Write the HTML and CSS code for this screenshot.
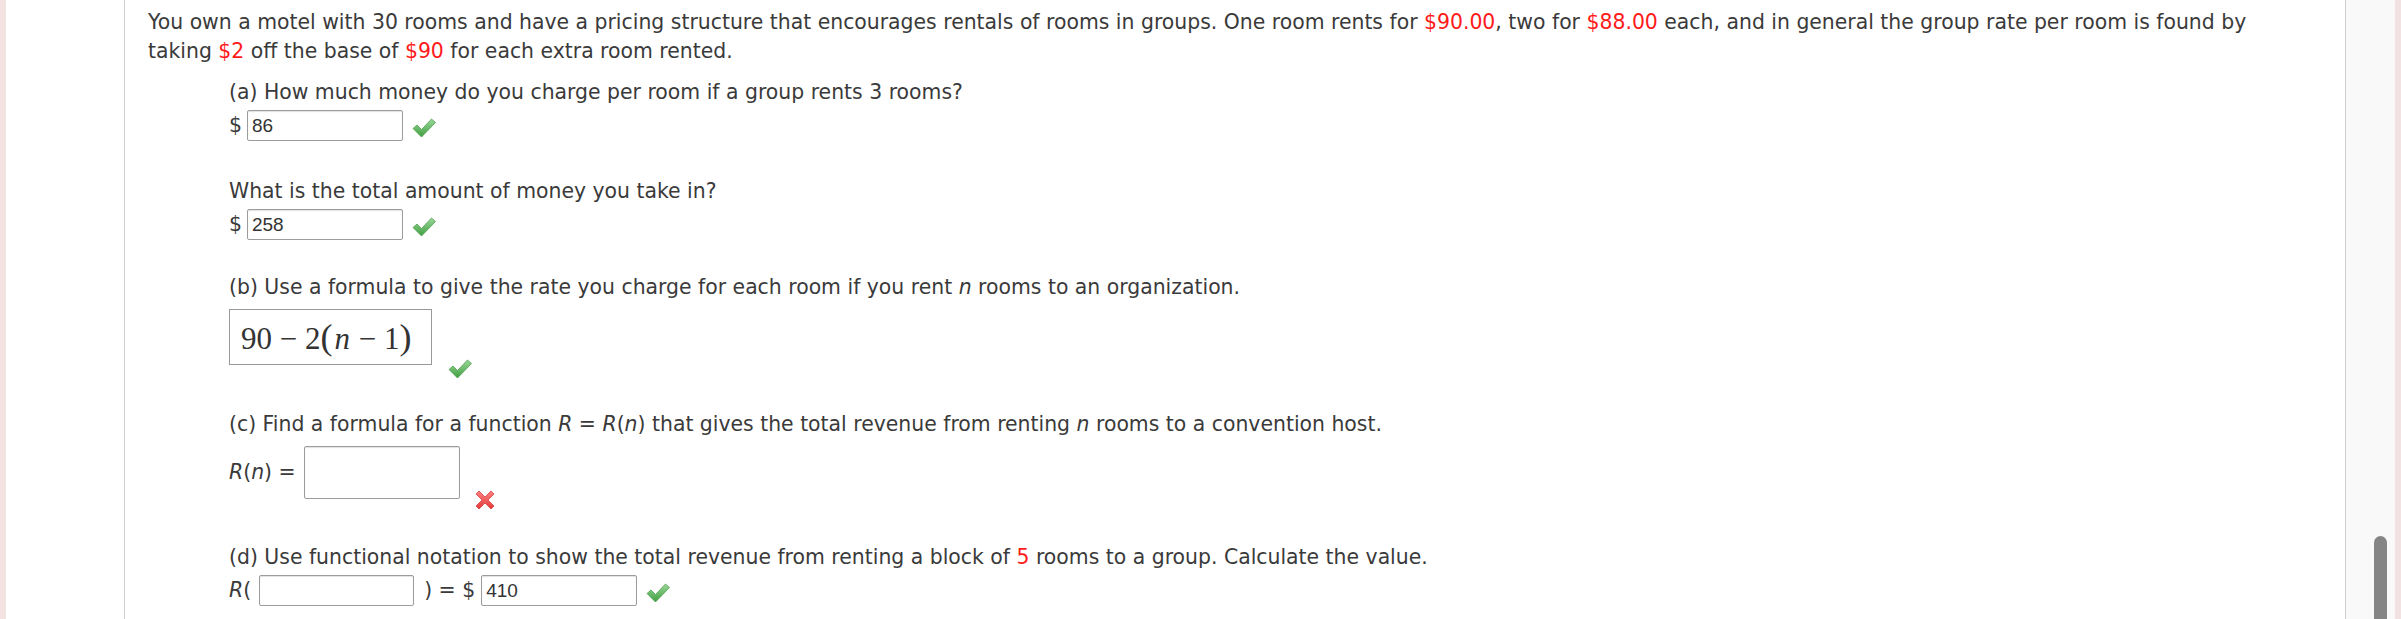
FILE: index.html
```html
<!DOCTYPE html>
<html>
<head>
<meta charset="utf-8">
<link rel="stylesheet" href="styles.css">
</head>
<body>
<div class="page">
  <div class="edge edge-l"></div>
  <div class="gutter-l"></div>
  <main class="content">
    <p class="intro">You own a motel with 30 rooms and have a pricing structure that encourages rentals of rooms in groups. One room rents for <span class="red">$90.00</span>, two for <span class="red">$88.00</span> each, and in general the group rate per room is found by taking <span class="red">$2</span> off the base of <span class="red">$90</span> for each extra room rented.</p>

    <section class="part part-a">
      <p class="q">(a) How much money do you charge per room if a group rents 3 rooms?</p>
      <div class="row">
        <span class="lbl">$</span>
        <span class="input">86</span>
        <svg class="ok" viewBox="0 0 24 20" width="24" height="20"><defs><linearGradient id="g1" x1="0" y1="0" x2="0" y2="1"><stop offset="0" stop-color="#9ad89a"/><stop offset="1" stop-color="#3f9e3f"/></linearGradient></defs><path d="M1 10.5 L5 7 L9.5 11.5 L19.5 1 L23.5 4.5 L9.5 19 Z" fill="url(#g1)" stroke="#4f9f4f" stroke-width="0.8" stroke-linejoin="round"/></svg>
      </div>
    </section>

    <section class="part part-a2">
      <p class="q">What is the total amount of money you take in?</p>
      <div class="row">
        <span class="lbl">$</span>
        <span class="input">258</span>
        <svg class="ok" viewBox="0 0 24 20" width="24" height="20"><defs><linearGradient id="g2" x1="0" y1="0" x2="0" y2="1"><stop offset="0" stop-color="#9ad89a"/><stop offset="1" stop-color="#3f9e3f"/></linearGradient></defs><path d="M1 10.5 L5 7 L9.5 11.5 L19.5 1 L23.5 4.5 L9.5 19 Z" fill="url(#g2)" stroke="#4f9f4f" stroke-width="0.8" stroke-linejoin="round"/></svg>
      </div>
    </section>

    <section class="part part-b">
      <p class="q">(b) Use a formula to give the rate you charge for each room if you rent <i>n</i> rooms to an organization.</p>
      <div class="row row-bottom">
        <span class="mathbox">90 − 2<span class="paren">(</span><i>n</i> − 1<span class="paren">)</span></span>
        <svg class="ok ok-low" viewBox="0 0 24 20" width="24" height="20"><defs><linearGradient id="g3" x1="0" y1="0" x2="0" y2="1"><stop offset="0" stop-color="#9ad89a"/><stop offset="1" stop-color="#3f9e3f"/></linearGradient></defs><path d="M1 10.5 L5 7 L9.5 11.5 L19.5 1 L23.5 4.5 L9.5 19 Z" fill="url(#g3)" stroke="#4f9f4f" stroke-width="0.8" stroke-linejoin="round"/></svg>
      </div>
    </section>

    <section class="part part-c">
      <p class="q">(c) Find a formula for a function <i>R</i> = <i>R</i>(<i>n</i>) that gives the total revenue from renting <i>n</i> rooms to a convention host.</p>
      <div class="row row-c">
        <span class="lbl"><i>R</i>(<i>n</i>) =</span>
        <span class="input input-big"></span>
        <svg class="bad" viewBox="0 0 22 22" width="22" height="22"><defs><linearGradient id="r1" x1="0" y1="0" x2="0" y2="1"><stop offset="0" stop-color="#ff8080"/><stop offset="1" stop-color="#e23b3b"/></linearGradient></defs><path d="M2 5 L5 2 L11 8 L17 2 L20 5 L14 11 L20 17 L17 20 L11 14 L5 20 L2 17 L8 11 Z" fill="url(#r1)" stroke="#d84040" stroke-width="0.8" stroke-linejoin="round"/></svg>
      </div>
    </section>

    <section class="part part-d">
      <p class="q">(d) Use functional notation to show the total revenue from renting a block of <span class="red">5</span> rooms to a group. Calculate the value.</p>
      <div class="row">
        <span class="lbl lbl-r"><i>R</i>(</span>
        <span class="input input-arg"></span>
        <span class="lbl lbl-mid">) = $</span>
        <span class="input">410</span>
        <svg class="ok" viewBox="0 0 24 20" width="24" height="20"><defs><linearGradient id="g4" x1="0" y1="0" x2="0" y2="1"><stop offset="0" stop-color="#9ad89a"/><stop offset="1" stop-color="#3f9e3f"/></linearGradient></defs><path d="M1 10.5 L5 7 L9.5 11.5 L19.5 1 L23.5 4.5 L9.5 19 Z" fill="url(#g4)" stroke="#4f9f4f" stroke-width="0.8" stroke-linejoin="round"/></svg>
      </div>
    </section>
  </main>
  <div class="gutter-r"><div class="thumb"></div></div>
  <div class="edge edge-r"></div>
</div>
</body>
</html>
```
FILE: styles.css
```css
html, body {
  margin: 0;
  padding: 0;
  background: #ffffff;
}
body {
  font-family: "DejaVu Sans", Verdana, sans-serif;
  font-size: 20.4px;
  color: #3a3a3a;
}
.page {
  display: flex;
  height: 619px;
  overflow: hidden;
}
.edge {
  width: 6px;
  background: #f2e2e2;
  flex: none;
}
.gutter-l {
  width: 118px;
  flex: none;
  background: #ffffff;
  border-right: 1px solid #cfcfcf;
}
.content {
  flex: 1;
  padding: 8px 60px 0 23px;
  line-height: 29px;
}
.gutter-r {
  width: 49px;
  flex: none;
  border-left: 1px solid #cfcfcf;
  background: #f9f9f9;
  position: relative;
}
.thumb {
  position: absolute;
  left: 28px;
  top: 536px;
  width: 13px;
  height: 120px;
  background: #858585;
  border-radius: 7px 7px 0 0;
}
p {
  margin: 0;
}
.red {
  color: #ff1a1a;
}
.part {
  margin-left: 81px;
}
.part-a { margin-top: 12px; }
.part-a2 { margin-top: 36px; }
.part-b { margin-top: 33px; }
.part-c { margin-top: 45px; }
.part-d { margin-top: 44px; }
.row {
  display: flex;
  align-items: flex-end;
  margin-top: 3px;
}
.lbl {
  line-height: 31px;
  align-self: center;
  margin-right: 5px;
}
.lbl-r {
  margin-right: 8px;
}
.lbl-mid {
  margin-left: 10px;
  margin-right: 6px;
}
.input {
  box-sizing: border-box;
  width: 156px;
  height: 31px;
  border: 1px solid #9c9c9c;
  border-radius: 2px;
  box-shadow: inset 0 1px 1px rgba(0,0,0,0.12);
  font-family: "Liberation Sans", Arial, sans-serif;
  font-size: 19px;
  line-height: 29px;
  padding-left: 4px;
  color: #333333;
  background: #ffffff;
}
.input-arg {
  width: 155px;
}
.input-big {
  width: 156px;
  height: 53px;
}
.row-c {
  margin-top: 7px;
}
.row-c .lbl {
  margin-right: 8px;
}
.ok {
  margin-left: 9px;
  margin-bottom: 3px;
  flex: none;
}
.ok-low {
  margin-left: 16px;
  margin-bottom: -14px;
}
.bad {
  margin-left: 14px;
  margin-bottom: -12px;
  flex: none;
}
.row-bottom {
  margin-top: 7px;
}
.mathbox {
  box-sizing: border-box;
  width: 203px;
  height: 56px;
  border: 1px solid #999999;
  font-family: "Liberation Serif", "DejaVu Serif", serif;
  font-size: 31px;
  line-height: 54px;
  padding-left: 11px;
  color: #333333;
  white-space: nowrap;
}
.mathbox i {
  font-style: italic;
  margin: 0 1px 0 2px;
}
.paren {
  font-size: 36px;
}
```
